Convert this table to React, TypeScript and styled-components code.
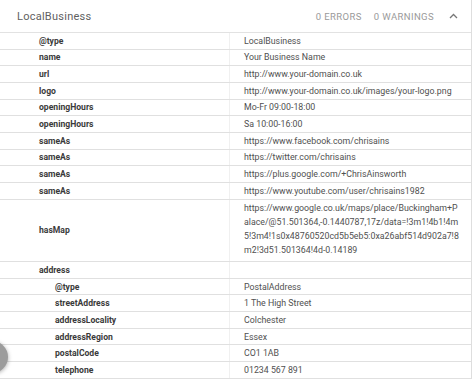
import React from 'react'
import styled, { createGlobalStyle } from 'styled-components'

const GlobalStyle = createGlobalStyle`
  html, body {
    margin: 0;
    padding: 0;
    background: #ffffff;
    font-family: Roboto, 'Liberation Sans', Arial, sans-serif;
    overflow: hidden;
  }
`

const Page = styled.div`
  position: relative;
  width: 474px;
  height: 381px;
  overflow: hidden;
  background: #ffffff;
`

const Card = styled.div`
  width: 472px;
  border-right: 1px solid #dedede;
  box-sizing: border-box;
`

const Header = styled.div`
  height: 33px;
  display: flex;
  align-items: center;
  padding: 0 13px 0 17px;
  border-bottom: 1px solid #e2e2e2;
  box-sizing: border-box;
`

const Title = styled.span`
  flex: 1;
  font-size: 11px;
  letter-spacing: 0.25px;
  color: #5f5f5f;
`

const Count = styled.span<{ gap?: number }>`
  font-size: 9.5px;
  letter-spacing: 0.4px;
  color: #9a9a9a;
  margin-right: ${(props) => props.gap ?? 0}px;
`

const Chevron = styled.svg`
  width: 9px;
  height: 6px;
  margin-top: -1px;
`

const Row = styled.div<{ tall?: boolean }>`
  display: flex;
  align-items: center;
  height: ${(props) => (props.tall ? '62.6px' : '16.67px')};
  border-bottom: 1px solid #e0e0e0;
  box-sizing: border-box;
`

const Key = styled.div<{ nested?: boolean }>`
  width: 229px;
  flex-shrink: 0;
  padding-left: ${(props) => (props.nested ? 55 : 39)}px;
  box-sizing: border-box;
  font-size: 8.6px;
  font-weight: 700;
  color: #3a3a3a;
  white-space: nowrap;
`

const Value = styled.div<{ tall?: boolean }>`
  flex: 1;
  align-self: stretch;
  display: flex;
  flex-direction: column;
  justify-content: ${(props) => (props.tall ? 'flex-start' : 'center')};
  padding: ${(props) => (props.tall ? '1px 10px 0 14px' : '0 10px 0 14px')};
  border-left: 1px solid #f0f0f0;
  font-size: 8.8px;
  line-height: ${(props) => (props.tall ? '14px' : 'normal')};
  color: #505050;
  white-space: nowrap;
`

const Fab = styled.div`
  position: absolute;
  left: -24px;
  top: 341px;
  width: 32px;
  height: 32px;
  border-radius: 50%;
  background: #9c9c9c;
  box-shadow: 0 1px 4px rgba(0, 0, 0, 0.35);
`

type Entry = {
  name: string
  value: string[]
  nested?: boolean
  tall?: boolean
}

const entries: Entry[] = [
  { name: '@type', value: ['LocalBusiness'] },
  { name: 'name', value: ['Your Business Name'] },
  { name: 'url', value: ['http://www.your-domain.co.uk'] },
  { name: 'logo', value: ['http://www.your-domain.co.uk/images/your-logo.png'] },
  { name: 'openingHours', value: ['Mo-Fr 09:00-18:00'] },
  { name: 'openingHours', value: ['Sa 10:00-16:00'] },
  { name: 'sameAs', value: ['https://www.facebook.com/chrisains'] },
  { name: 'sameAs', value: ['https://twitter.com/chrisains'] },
  { name: 'sameAs', value: ['https://plus.google.com/+ChrisAinsworth'] },
  { name: 'sameAs', value: ['https://www.youtube.com/user/chrisains1982'] },
  {
    name: 'hasMap',
    // the URL wraps mid-word, as in the tool
    value: [
      'https://www.google.co.uk/maps/place/Buckingham+P',
      'alace/@51.501364,-0.1440787,17z/data=!3m1!4b1!4m',
      '5!3m4!1s0x48760520cd5b5eb5:0xa26abf514d902a7!8',
      'm2!3d51.501364!4d-0.14189',
    ],
    tall: true,
  },
  { name: 'address', value: [] },
  { name: '@type', value: ['PostalAddress'], nested: true },
  { name: 'streetAddress', value: ['1 The High Street'], nested: true },
  { name: 'addressLocality', value: ['Colchester'], nested: true },
  { name: 'addressRegion', value: ['Essex'], nested: true },
  { name: 'postalCode', value: ['CO1 1AB'], nested: true },
  { name: 'telephone', value: ['01234 567 891'], nested: true },
]

const App = () => {
  return (
    <Page>
      <GlobalStyle />
      <Card>
        <Header>
          <Title>LocalBusiness</Title>
          <Count gap={12}>0 ERRORS</Count>
          <Count gap={15}>0 WARNINGS</Count>
          <Chevron viewBox="0 0 9 6">
            <polyline points="1,5 4.5,1.5 8,5" fill="none" stroke="#777" strokeWidth="1.3" />
          </Chevron>
        </Header>
        {entries.map((entry, index) => (
          <Row key={index} tall={entry.tall}>
            <Key nested={entry.nested}>{entry.name}</Key>
            <Value tall={entry.tall}>
              {entry.value.map((line, i) => (
                <span key={i}>{line}</span>
              ))}
            </Value>
          </Row>
        ))}
      </Card>
      <Fab />
    </Page>
  )
}

export default App
